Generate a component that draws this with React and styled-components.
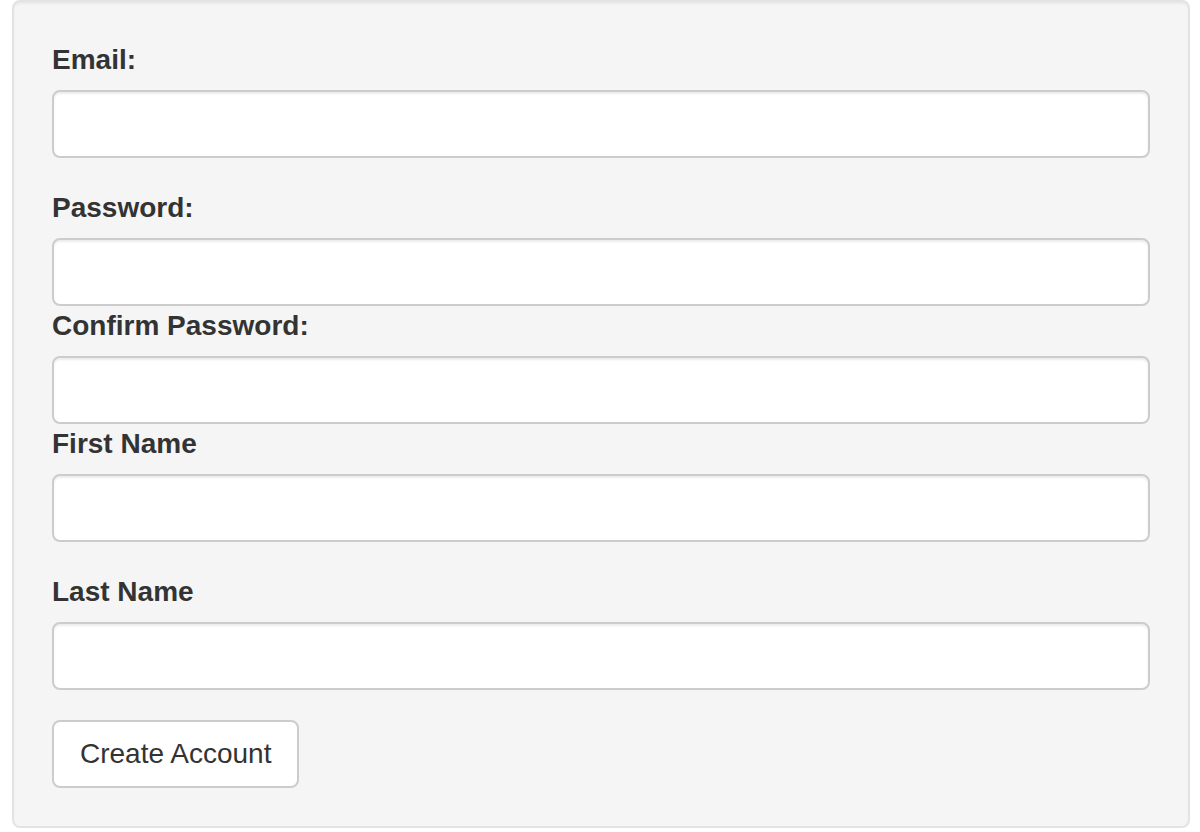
import React from "react";
import styled, { createGlobalStyle } from "styled-components";

const Global = createGlobalStyle`
  * { box-sizing: border-box; }
  html, body { margin: 0; padding: 0; background: #fff; }
  body {
    font-family: "Liberation Sans", Arial, Helvetica, sans-serif;
    font-size: 28px;
    line-height: 40px;
    color: #333;
  }
`;

const Well = styled.form`
  margin: 0 0 0 12px;
  width: 1178px;
  padding: 38px;
  background: #f5f5f5;
  border: 2px solid #e3e3e3;
  border-radius: 8px;
  box-shadow: inset 0 2px 2px rgba(0, 0, 0, 0.05);
`;

const Group = styled.div`
  margin-bottom: ${(p) => (p.$tight ? "0" : "30px")};
`;

const Label = styled.label`
  display: block;
  font-weight: bold;
  font-size: 28px;
  line-height: 40px;
  margin-bottom: 10px;
`;

const Input = styled.input`
  display: block;
  width: 100%;
  height: 68px;
  padding: 12px 24px;
  font-family: inherit;
  font-size: 28px;
  color: #555;
  background: #fff;
  border: 2px solid #ccc;
  border-radius: 8px;
  box-shadow: inset 0 2px 2px rgba(0, 0, 0, 0.075);
  outline: none;
`;

const Button = styled.button`
  display: inline-block;
  height: 68px;
  padding: 12px 26px;
  font-family: inherit;
  font-size: 28px;
  line-height: 40px;
  color: #333;
  background: #fff;
  border: 2px solid #ccc;
  border-radius: 8px;
  cursor: pointer;
`;

const fields = [
  { label: "Email:", type: "email" },
  { label: "Password:", type: "password", tight: true },
  { label: "Confirm Password:", type: "password", tight: true },
  { label: "First Name", type: "text" },
  { label: "Last Name", type: "text" },
];

export default function App() {
  return (
    <>
      <Global />
      <Well onSubmit={(e) => e.preventDefault()}>
        {fields.map((f, i) => (
          <Group key={i} $tight={f.tight}>
            <Label>{f.label}</Label>
            <Input type={f.type} />
          </Group>
        ))}
        <Button type="submit">Create Account</Button>
      </Well>
    </>
  );
}
